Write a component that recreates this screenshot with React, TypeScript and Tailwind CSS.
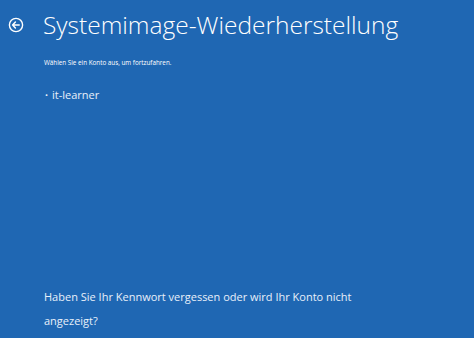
import React from "react";

export default function App() {
  return (
    <div
      className="w-[474px] h-[338px] bg-[#1f67b3] text-white flex flex-col overflow-hidden"
      style={{ fontFamily: '"Open Sans", "Noto Sans", sans-serif' }}
    >
      <div className="flex items-center h-[50px] pl-[8px]">
        <svg width="16" height="16" viewBox="0 0 16 16" className="shrink-0">
          <circle cx="8" cy="8" r="6.6" fill="none" stroke="white" strokeWidth="1.4" />
          <path d="M4.6 8 H11.2 M7.4 5 L4.6 8 L7.4 11" fill="none" stroke="white" strokeWidth="1.5" strokeLinecap="round" strokeLinejoin="round" />
        </svg>
        <h1 className="ml-[19px] text-[24.5px] tracking-[0px] font-light leading-none text-white">
          Systemimage-Wiederherstellung
        </h1>
      </div>
      <div className="pl-[44px] mt-[8px] text-[6.3px] leading-[9px] text-white">
        Wählen Sie ein Konto aus, um fortzufahren.
      </div>
      <div className="pl-[45px] mt-[21px] flex items-center text-[11px] leading-[14px] text-[#e8f0fa]">
        <span className="text-[8px] mr-[4px]">•</span>
        <span>it-learner</span>
      </div>
      <div className="flex-1" />
      <div className="pl-[44px] pb-[5px] text-[11px] leading-[24px] text-[#e8f0fa] w-[380px]">
        Haben Sie Ihr Kennwort vergessen oder wird Ihr Konto nicht angezeigt?
      </div>
    </div>
  );
}
